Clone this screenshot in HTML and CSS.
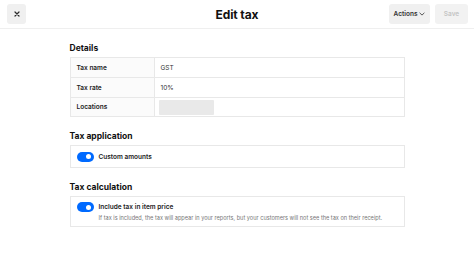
FILE: index.html
```html
<!DOCTYPE html>
<html>
<head>
<meta charset="utf-8">
<link rel="stylesheet" href="styles.css">
</head>
<body>
<header class="topbar">
  <button class="btn close-btn" aria-label="Close">
    <svg width="8" height="8" viewBox="0 0 8 8"><path d="M2 2L6 6M6 2L2 6" stroke="#2a2a2a" stroke-width="1.2" stroke-linecap="round"/></svg>
  </button>
  <h1 class="title">Edit tax</h1>
  <div class="actions">
    <button class="btn actions-btn">Actions
      <svg width="6" height="4" viewBox="0 0 6 4"><path d="M0.6 0.8L3 3.1L5.4 0.8" fill="none" stroke="#444" stroke-width="0.9"/></svg>
    </button>
    <button class="btn save-btn">Save</button>
  </div>
</header>
<main class="content">
  <section class="section">
    <h2 class="heading">Details</h2>
    <div class="table">
      <div class="row"><div class="label">Tax name</div><div class="value">GST</div></div>
      <div class="row"><div class="label">Tax rate</div><div class="value">10%</div></div>
      <div class="row"><div class="label">Locations</div><div class="value"><span class="placeholder"></span></div></div>
    </div>
  </section>
  <section class="section">
    <h2 class="heading">Tax application</h2>
    <div class="box">
      <div class="toggle-row">
        <span class="toggle"><span class="knob"></span></span>
        <span class="toggle-label">Custom amounts</span>
      </div>
    </div>
  </section>
  <section class="section">
    <h2 class="heading">Tax calculation</h2>
    <div class="box box-tall">
      <div class="toggle-row">
        <span class="toggle"><span class="knob"></span></span>
        <span class="toggle-label">Include tax in item price</span>
      </div>
      <p class="help">If tax is included, the tax will appear in your reports, but your customers will not see the tax on their receipt.</p>
    </div>
  </section>
</main>
</body>
</html>
```
FILE: styles.css
```css
* { box-sizing: border-box; }
html, body { margin: 0; padding: 0; background: #fff; }
body { font-family: Inter, "Open Sans", "Liberation Sans", sans-serif; color: #1a1a1a; }

.topbar {
  height: 29px;
  border-bottom: 1px solid #efefef;
  display: flex;
  align-items: center;
  justify-content: space-between;
  padding: 0 6px 1px 7px;
  position: relative;
}
.btn {
  border: none;
  background: #f0f0f0;
  border-radius: 3px;
  height: 20px;
  font-family: inherit;
  font-size: 6.5px;
  font-weight: 600;
  color: #333;
  display: inline-flex;
  align-items: center;
  justify-content: center;
  padding: 0;
  cursor: pointer;
}
.close-btn { width: 19px; }
.close-btn svg { display: block; }
.title {
  margin: 0;
  font-size: 12px;
  font-weight: 700;
  color: #111;
  position: absolute;
  left: 0; right: 0;
  top: 7px;
  text-align: center;
  pointer-events: none;
  letter-spacing: -0.1px;
}
.actions { display: flex; gap: 5px; }
.actions-btn { width: 41px; gap: 2px; }
.save-btn { width: 33px; color: #c4c4c4; background: #f2f2f2; }

.content {
  width: 335px;
  margin: 0 auto;
  padding-top: 14px;
}
.section { margin-bottom: 14px; }
.heading {
  margin: 0 0 4px;
  font-size: 8.5px;
  font-weight: 700;
  line-height: 10px;
  color: #111;
}
.table {
  border: 1px solid #e8e8e8;
}
.row {
  display: flex;
  height: 20px;
  border-bottom: 1px solid #e8e8e8;
  font-size: 6.5px;
}
.row:last-child { border-bottom: none; height: 18px; }
.label {
  width: 84px;
  border-right: 1px solid #e8e8e8;
  background: #fbfbfb;
  display: flex;
  align-items: center;
  padding-left: 6px;
  font-weight: 600;
  color: #222;
}
.value {
  flex: 1;
  display: flex;
  align-items: center;
  padding-left: 6px;
  color: #333;
}
.placeholder {
  display: block;
  width: 55px;
  height: 15px;
  background: #e9e9e9;
  border-radius: 1px;
  margin-left: -2px;
}
.box {
  border: 1px solid #e8e8e8;
  height: 23px;
  padding: 0 6px;
  display: flex;
  flex-direction: column;
  justify-content: center;
}
.box-tall { height: 31px; padding-top: 1px; }
.toggle-row { display: flex; align-items: center; gap: 5px; }
.toggle {
  width: 17px;
  height: 10px;
  border-radius: 5px;
  background: #006aff;
  position: relative;
  flex: none;
}
.knob {
  position: absolute;
  width: 5px; height: 5px;
  border-radius: 50%;
  background: #fff;
  right: 3px; top: 2.5px;
}
.toggle-label { font-size: 6.5px; font-weight: 600; color: #222; }
.help {
  margin: 2px 0 0 22px;
  font-size: 5.6px;
  color: #777;
  line-height: 8px;
  white-space: nowrap;
}
```
